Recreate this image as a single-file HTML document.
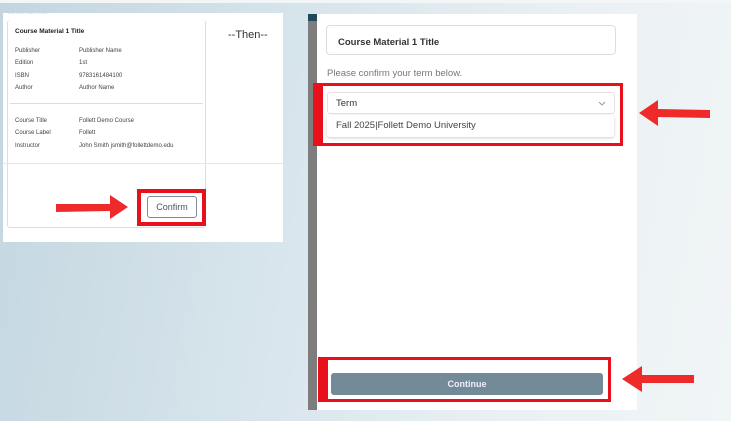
<!DOCTYPE html>
<html><head><style>
*{margin:0;padding:0;box-sizing:border-box}
body{width:731px;height:421px;overflow:hidden;position:relative;font-family:"Liberation Sans",Arial,sans-serif;background:linear-gradient(100deg,#c3d6e0 0%,#d8e5ec 40%,#e9f0f3 70%,#f1f5f6 100%)}
.a{position:absolute}
.sm{font-size:6px;color:#444}
</style></head><body>
<div class="a" style="left:0;top:0;width:731px;height:3px;background:#f3f6f7"></div>
<div class="a" style="left:3px;top:13px;width:280px;height:229px;background:#fff"></div>
<div class="a" style="left:8px;top:11px;font-size:5px;color:#aaa">···· ····· ····· · ·····</div>
<div class="a" style="left:7px;top:20px;width:199px;height:208px;border:1px solid #ddd;border-top:none;border-radius:3px"></div>
<div class="a" style="left:3px;top:163px;width:280px;height:1px;background:#e6e6e6"></div>
<div class="a" style="left:10px;top:103px;width:193px;height:1px;background:#ddd"></div>
<div class="a" style="left:15px;top:28px;font-size:6.5px;font-weight:bold;color:#222">Course Material 1 Title</div>
<div class="a sm" style="left:15px;top:48px">Publisher</div><div class="a sm" style="left:79px;top:48px">Publisher Name</div>
<div class="a sm" style="left:15px;top:60px">Edition</div><div class="a sm" style="left:79px;top:60px">1st</div>
<div class="a sm" style="left:15px;top:73px">ISBN</div><div class="a sm" style="left:79px;top:73px">9783161484100</div>
<div class="a sm" style="left:15px;top:85px">Author</div><div class="a sm" style="left:79px;top:85px">Author Name</div>
<div class="a sm" style="left:15px;top:118px">Course Title</div><div class="a sm" style="left:79px;top:118px">Follett Demo Course</div>
<div class="a sm" style="left:15px;top:130px">Course Label</div><div class="a sm" style="left:79px;top:130px">Follett</div>
<div class="a sm" style="left:15px;top:143px">Instructor</div><div class="a sm" style="left:79px;top:143px">John Smith jsmith@follettdemo.edu</div>
<div class="a" style="left:228px;top:29px;font-size:11px;color:#333">--Then--</div>
<div class="a" style="left:137px;top:189px;width:69px;height:37px;border:4px solid #e8101a"></div>
<div class="a" style="left:147px;top:196px;width:50px;height:22px;border:1px solid #7a8a96;border-radius:3px;font-size:9px;color:#456;text-align:center;line-height:20px">Confirm</div>
<svg class="a" style="left:50px;top:190px" width="85" height="35"><polygon points="6,14 60,14 60,5 78,17 60,29 60,21 6,22" fill="#ee2a2a"/></svg>

<div class="a" style="left:308px;top:14px;width:9px;height:396px;background:#7d7d7d"></div>
<div class="a" style="left:308px;top:14px;width:9px;height:7px;background:#1e4a5c"></div>
<div class="a" style="left:317px;top:14px;width:320px;height:396px;background:#fff"></div>
<div class="a" style="left:326px;top:25px;width:290px;height:30px;border:1px solid #ddd;border-radius:4px;font-size:9.5px;font-weight:bold;color:#333;padding:11px 0 0 11px">Course Material 1 Title</div>
<div class="a" style="left:327px;top:68px;font-size:9.5px;color:#777">Please confirm your term below.</div>
<div class="a" style="left:313px;top:83px;width:310px;height:63px;border:3px solid #e8101a;border-left-width:10px"></div>
<div class="a" style="left:327px;top:92px;width:288px;height:22px;border:1px solid #e3e3e3;border-radius:3px;font-size:9.5px;color:#333;padding:5px 0 0 8px">Term<svg style="position:absolute;right:8px;top:8px" width="8" height="5"><polyline points="1,1 4,4 7,1" fill="none" stroke="#999" stroke-width="1"/></svg></div>
<div class="a" style="left:327px;top:115px;width:287px;height:22px;background:#fff;box-shadow:0 1px 3px rgba(0,0,0,.2);border-radius:3px;font-size:9.5px;color:#444;padding:5px 0 0 9px">Fall 2025|Follett Demo University</div>
<svg class="a" style="left:636px;top:96px" width="80" height="34"><polygon points="3,17 22,4 22,13 74,14 74,22 22,21 22,30" fill="#ee2a2a"/></svg>
<div class="a" style="left:318px;top:357px;width:293px;height:45px;border:3px solid #e8101a;border-left-width:10px"></div>
<div class="a" style="left:331px;top:373px;width:272px;height:22px;background:#738a97;border-radius:3px;color:#eef;font-size:9px;font-weight:bold;text-align:center;line-height:22px">Continue</div>
<svg class="a" style="left:620px;top:362px" width="80" height="36"><polygon points="2,17 22,4 22,13 74,13 74,21 22,21 22,30" fill="#ee2a2a"/></svg>
</body></html>
